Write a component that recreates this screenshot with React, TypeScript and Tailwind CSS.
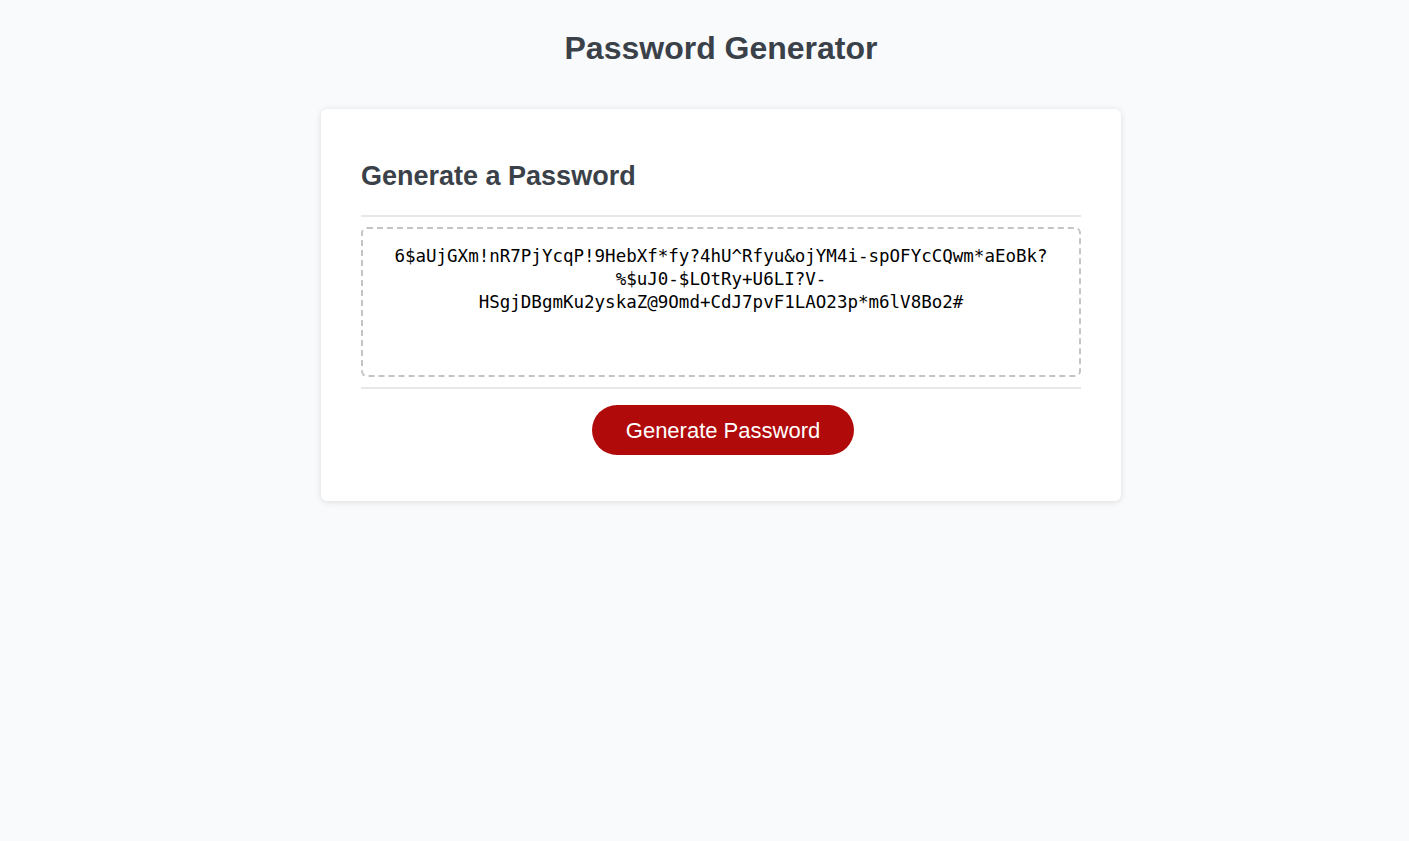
import { useState } from 'react';

const initialLines = [
  '6$aUjGXm!nR7PjYcqP!9HebXf*fy?4hU^Rfyu&ojYM4i-spOFYcCQwm*aEoBk?',
  '%$uJ0-$LOtRy+U6LI?V-',
  'HSgjDBgmKu2yskaZ@9Omd+CdJ7pvF1LAO23p*m6lV8Bo2#',
];

export default function App() {
  const [password] = useState(initialLines.join('\n'));

  return (
    <div className="min-h-screen bg-[#f9fafc] pl-[33px] font-['Liberation_Sans',Arial,sans-serif]">
      <h1 className="pt-[30px] text-center text-[32px] leading-[36px] font-bold text-[#3a4149]">
        Password Generator
      </h1>
      <div className="mx-auto mt-[43px] w-[800px] rounded-md bg-white px-10 pt-10 pb-[46px] shadow-[0_1px_6px_rgba(0,0,0,0.12)]">
        <h2 className="mt-[12px] mb-[23px] text-[27px] leading-[31px] font-bold text-[#3a4149]">
          Generate a Password
        </h2>
        <div className="border-t-2 border-[#e8e8e8] pt-[10px] pb-[10px]">
          <textarea
            readOnly
            value={password}
            className="block h-[150px] w-full resize-none rounded-md border-2 border-dashed border-[#c4c4c4] px-4 pt-[16px] text-center font-['DejaVu_Sans_Mono',monospace] text-[17.5px] leading-[23px] text-black outline-none"
          />
        </div>
        <div className="flex justify-center border-t-2 border-[#e8e8e8] pt-[16px] pl-[4px]">
          <button className="h-[50px] rounded-full bg-[#b00a0a] px-[34px] text-[22px] text-white">
            Generate Password
          </button>
        </div>
      </div>
    </div>
  );
}
